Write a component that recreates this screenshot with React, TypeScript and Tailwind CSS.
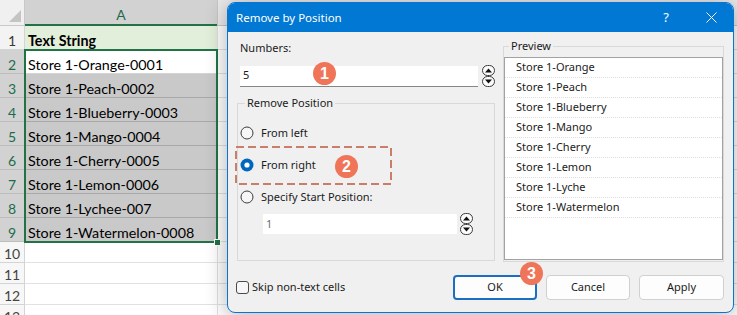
import React from "react";

const cells = [
  "Store 1-Orange-0001",
  "Store 1-Peach-0002",
  "Store 1-Blueberry-0003",
  "Store 1-Mango-0004",
  "Store 1-Cherry-0005",
  "Store 1-Lemon-0006",
  "Store 1-Lychee-007",
  "Store 1-Watermelon-0008",
];

const preview = [
  "Store 1-Orange",
  "Store 1-Peach",
  "Store 1-Blueberry",
  "Store 1-Mango",
  "Store 1-Cherry",
  "Store 1-Lemon",
  "Store 1-Lyche",
  "Store 1-Watermelon",
];

function Spinner() {
  return (
    <svg width="13" height="22" viewBox="0 0 13 22">
      <rect x="0.5" y="0.5" width="12" height="10" rx="5" fill="#fbfbfb" stroke="#3a3a3a" />
      <path d="M3 7.5 L6.5 3.5 L10 7.5 Z" fill="#111" />
      <rect x="0.5" y="11.5" width="12" height="10" rx="5" fill="#fbfbfb" stroke="#3a3a3a" />
      <path d="M3 14.5 L6.5 18.5 L10 14.5 Z" fill="#111" />
    </svg>
  );
}

function Radio({ checked }: { checked?: boolean }) {
  return (
    <svg width="14" height="14" viewBox="0 0 14 14">
      {checked ? (
        <>
          <circle cx="7" cy="7" r="6.5" fill="#0067c0" />
          <circle cx="7" cy="7" r="2.6" fill="#fff" />
        </>
      ) : (
        <circle cx="7" cy="7" r="6" fill="#f6f6f6" stroke="#3c3c3c" />
      )}
    </svg>
  );
}

function Badge({ n, className }: { n: number; className: string }) {
  return (
    <div
      className={
        "absolute w-[23px] h-[23px] rounded-full bg-[#ef7458] text-white font-bold text-[16px] leading-none flex items-center justify-center font-['Liberation_Sans',sans-serif] " +
        className
      }
    >
      {n}
    </div>
  );
}

function Sheet() {
  return (
    <div className="flex font-['Lato',sans-serif] text-[14.3px] text-black">
      {/* row headers */}
      <div className="w-[25px] flex flex-col text-[14px]">
        <div className="h-[26px] bg-[#f0f0f0] border-b border-r border-[#c8c8c8] flex items-end justify-end pr-[3px] pb-[3px]">
          <svg width="12" height="12" viewBox="0 0 12 12">
            <path d="M12 0 L12 12 L0 12 Z" fill="#c4c4c4" />
          </svg>
        </div>
        <div className="h-[24px] bg-[#f3f3f3] border-b border-r border-[#d4d4d4] flex items-center justify-center pt-[6px] text-[#3a3a2a]">
          1
        </div>
        {cells.map((_, i) => (
          <div
            key={i}
            className="h-[24px] bg-[#d2d2d2] border-b border-r border-[#bdbdbd] flex items-center justify-center pt-[6px] text-[#1e6b4c]"
          >
            {i + 2}
          </div>
        ))}
        {[10, 11, 12, 13].map((n) => (
          <div
            key={n}
            className="h-[21px] bg-[#f7f7f7] border-b border-r border-[#d4d4d4] flex items-center justify-center pt-[3px] text-[#444]"
          >
            {n}
          </div>
        ))}
      </div>

      {/* column A */}
      <div className="w-[192px] flex flex-col">
        <div className="h-[26px] bg-[#d2d2d2] border-b-2 border-[#217346] flex items-center justify-center pt-[4px] text-[14px] text-[#1e6b4c]">
          A
        </div>
        <div className="h-[24px] bg-[#e2efda] border-b border-[#d4d4d4] flex items-center pl-[3px] pt-[6px] font-bold">
          Text String
        </div>
        <div className="relative outline-2 outline-[#217346] -outline-offset-1">
          {cells.map((c, i) => (
            <div
              key={c}
              className={
                "h-[24px] flex items-center pl-[3px] pt-[6px] border-b " +
                (i === 0 ? "bg-white border-[#d4d4d4]" : "bg-[#c9c9c9] border-[#a9a9a9]")
              }
            >
              {c}
            </div>
          ))}
          <div className="absolute -right-[4px] -bottom-[4px] w-[7px] h-[7px] bg-[#217346] border border-white" />
        </div>
        {[10, 11, 12, 13].map((n) => (
          <div key={n} className="h-[21px] bg-white border-b border-[#e1e1e1]" />
        ))}
      </div>

      {/* column B */}
      <div className="flex-1 flex flex-col">
        <div className="h-[26px] bg-[#ebebeb] border-b border-l border-[#c8c8c8]" />
        {Array.from({ length: 13 }).map((_, i) => (
          <div
            key={i}
            className={(i < 9 ? "h-[24px]" : "h-[21px]") + " bg-white border-b border-l border-[#e1e1e1]"}
          />
        ))}
      </div>
    </div>
  );
}

function Dialog() {
  return (
    <div className="absolute left-[227px] top-[2px] w-[507px] h-[311px] rounded-[8px] border border-[#0a74d0] bg-[#f0f0f0] overflow-hidden shadow-[0_2px_22px_rgba(0,0,0,0.32)] font-['Noto_Sans',sans-serif] text-[11px] text-[#1b1b1b]">
      {/* title bar */}
      <div className="h-[29px] bg-[#0078d4] flex items-center pl-[8px] text-white text-[11.5px]">
        <span>Remove by Position</span>
        <span className="ml-auto text-[13px] mr-[37px]">?</span>
        <svg width="11" height="11" viewBox="0 0 11 11" className="mr-[16px]">
          <path d="M0.5 0.5 L10.5 10.5 M10.5 0.5 L0.5 10.5" stroke="#fff" strokeWidth="1" />
        </svg>
      </div>

      {/* body */}
      <div className="flex flex-col px-[9px]">
        <div className="flex items-start gap-[8px]">
          {/* left column */}
          <div className="flex flex-col w-[258px]">
            <div className="mt-[8px] h-[16px] leading-[16px] pl-[3px]">Numbers:</div>
            <div className="mt-[9px] flex items-center pl-[3px]">
              <div className="w-[239px] h-[21px] bg-white border-b border-[#868686] flex items-center px-[3px]">
                5
              </div>
              <div className="ml-[4px]">
                <Spinner />
              </div>
            </div>
            <fieldset className="mt-[8px] h-[166px] border border-[#d9d9d9] pl-[2px] pt-[6px]">
              <legend className="ml-[5px] px-[2px] leading-[16px]">Remove Position</legend>
              <div className="h-[32px] flex items-center gap-[7px]">
                <Radio />
                <span>From left</span>
              </div>
              <div className="h-[32px] flex items-center gap-[7px]">
                <Radio checked />
                <span>From right</span>
              </div>
              <div className="h-[32px] flex items-center gap-[7px]">
                <Radio />
                <span>Specify Start Position:</span>
              </div>
              <div className="flex items-center ml-[23px]">
                <div className="w-[194px] h-[20px] bg-white flex items-center px-[3px] text-[#6e6e6e]">1</div>
                <div className="ml-[3px]">
                  <Spinner />
                </div>
              </div>
            </fieldset>
          </div>

          {/* right column */}
          <fieldset className="mt-[6px] w-[224px] h-[224px] border border-[#d9d9d9] pt-[3px]">
            <legend className="ml-[5px] px-[2px] leading-[16px]">Preview</legend>
            <div className="w-[219px] h-[203px] bg-white border border-[#a2a2a2]">
              {preview.map((p) => (
                <div
                  key={p}
                  className="h-[20px] flex items-center pl-[11px] border-b border-dotted border-[#dedede]"
                >
                  {p}
                </div>
              ))}
            </div>
          </fieldset>
        </div>

        {/* bottom row */}
        <div className="mt-[13px] flex items-center">
          <div className="-ml-[1px] w-[13px] h-[13px] rounded-[3px] border border-[#4a4a4a] bg-[#f7f7f7]" />
          <span className="ml-[3px]">Skip non-text cells</span>
          <div className="ml-auto flex gap-[9px]">
            <button className="w-[84px] h-[25px] rounded-[4px] bg-[#fdfdfd] border-2 border-[#1a6fc2] text-[11px]">
              OK
            </button>
            <button className="w-[84px] h-[25px] rounded-[4px] bg-[#fdfdfd] border border-[#d0d0d0] text-[11px]">
              Cancel
            </button>
            <button className="w-[85px] h-[25px] rounded-[4px] bg-[#fdfdfd] border border-[#d0d0d0] text-[11px]">
              Apply
            </button>
          </div>
        </div>
      </div>

      {/* annotations */}
      <svg className="absolute left-[7px] top-[143px]" width="157" height="39" viewBox="0 0 157 39">
        <rect x="1" y="1" width="155" height="37" fill="none" stroke="#c97e6a" strokeWidth="2" strokeDasharray="8 4" />
      </svg>
      <Badge n={1} className="left-[85px] top-[59px]" />
      <Badge n={2} className="left-[107px] top-[152px]" />
      <Badge n={3} className="left-[292px] top-[259px]" />
    </div>
  );
}

export default function App() {
  return (
    <div className="relative w-[737px] h-[315px] overflow-hidden bg-white">
      <Sheet />
      <Dialog />
    </div>
  );
}
